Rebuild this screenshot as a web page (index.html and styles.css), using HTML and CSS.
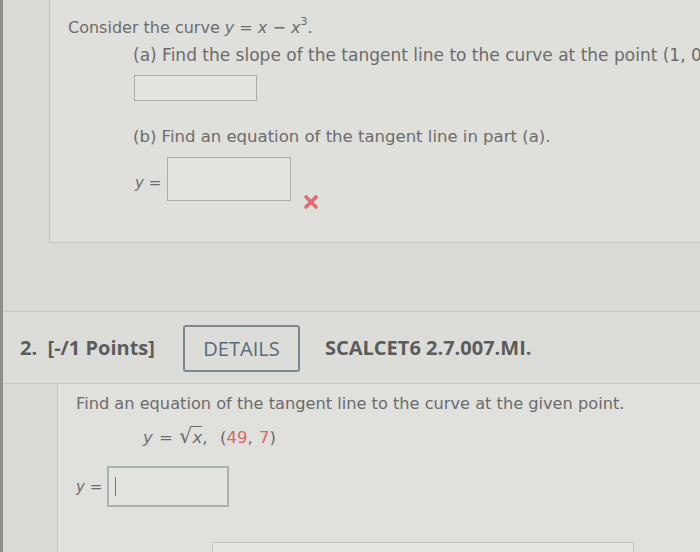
FILE: index.html
```html
<!DOCTYPE html>
<html>
<head>
<meta charset="utf-8">
<link rel="stylesheet" href="styles.css">
</head>
<body>
<div class="page">
  <section class="q1">
    <p class="intro">Consider the curve <i>y</i> = <i>x</i> − <i>x</i><sup>3</sup>.</p>
    <div class="part">
      <p class="ptext pa">(a) Find the slope of the tangent line to the curve at the point (1, 0).</p>
      <div class="inp inp-a"></div>
    </div>
    <div class="part part-b">
      <p class="ptext pb">(b) Find an equation of the tangent line in part (a).</p>
      <div class="ans-row ans1">
        <span class="lbl"><i>y</i> =</span>
        <div class="inp inp-b"></div>
        <svg class="wrong" width="16" height="16" viewBox="0 0 16 16"><path d="M3 3 L13 13 M13 3 L3 13" stroke="#e36b70" stroke-width="3.6" stroke-linecap="round"/></svg>
      </div>
    </div>
  </section>

  <div class="spacer"></div>

  <header class="qhead">
    <span class="qnum">2.&nbsp; [-/1 Points]</span>
    <span class="details">DETAILS</span>
    <span class="qid">SCALCET6 2.7.007.MI.</span>
  </header>

  <section class="q2">
    <p class="q2text">Find an equation of the tangent line to the curve at the given point.</p>
    <p class="formula"><i>y</i> = <span class="sqrt">√</span><span class="rad"><i>x</i></span>,&nbsp; (<span class="red">49</span>, <span class="red">7</span>)</p>
    <div class="ans-row ans2">
      <span class="lbl"><i>y</i> =</span>
      <div class="inp inp-c"><span class="caret"></span></div>
    </div>
    <div class="help"></div>
  </section>
</div>
</body>
</html>
```

FILE: styles.css
```css
html, body {
  margin: 0;
  padding: 0;
}
body {
  width: 700px;
  height: 552px;
  overflow: hidden;
  background: #d9d9d5;
  font-family: "DejaVu Sans", Verdana, sans-serif;
  color: #6c6c6c;
}
.page {
  border-left: 3px solid #8e8e8a;
  height: 552px;
  box-sizing: border-box;
  overflow: hidden;
}
p { margin: 0; }
i { font-style: italic; }

.q1 {
  margin-left: 46px;
  width: 700px;
  height: 243px;
  box-sizing: border-box;
  border-left: 1px solid #c2c2be;
  border-bottom: 1px solid #c2c2be;
  background: #dfdfdb;
  padding: 18px 0 0 18px;
}
.intro {
  font-size: 16px;
  line-height: 20px;
  white-space: nowrap;
}
.intro sup {
  font-size: 11px;
  vertical-align: 8px;
  line-height: 0;
}
.part {
  margin-left: 65px;
  white-space: nowrap;
}
.ptext {
  line-height: 20px;
}
.pa {
  font-size: 17px;
  margin-top: 7px;
}
.pb {
  font-size: 16.5px;
  margin-top: 26px;
}
.inp {
  background: #e3e3df;
  border: 1px solid #a9aca9;
  box-sizing: border-box;
}
.inp-a {
  width: 123px;
  height: 26px;
  margin-top: 10px;
  margin-left: 1px;
}
.ans-row {
  display: flex;
  align-items: center;
}
.ans1 { margin-top: 1px; }
.lbl {
  font-size: 15px;
  width: 34px;
  padding-left: 2px;
  box-sizing: border-box;
}
.ans1 .lbl { margin-top: 8px; }
.inp-b {
  width: 124px;
  height: 44px;
}
.wrong {
  align-self: flex-start;
  margin-top: 46px;
  margin-left: 12px;
}

.spacer { height: 68px; }

.qhead {
  height: 73px;
  box-sizing: border-box;
  border-top: 1px solid #c6c6c2;
  border-bottom: 1px solid #c6c6c2;
  background: #dcdcd8;
  display: flex;
  align-items: center;
  padding-left: 17px;
  font-family: "Open Sans", sans-serif;
  font-size: 20px;
  color: #5c5c5c;
  white-space: nowrap;
}
.qnum { font-weight: 700; width: 163px; }
.details {
  width: 117px;
  height: 47px;
  box-sizing: border-box;
  border: 2px solid #7b8791;
  border-radius: 3px;
  display: flex;
  align-items: center;
  justify-content: center;
  color: #5a6b7b;
  font-weight: 400;
  margin-top: 2px;
}
.qid { font-weight: 700; margin-left: 25px; }

.q2 {
  margin-left: 54px;
  height: 170px;
  border-left: 1px solid #c6c6c2;
  background: #e0e0dc;
  padding: 10px 0 0 18px;
  position: relative;
}
.q2text {
  font-size: 16.2px;
  line-height: 20px;
  white-space: nowrap;
}
.formula {
  font-size: 16.5px;
  margin-top: 12px;
  margin-left: 67px;
  line-height: 20px;
  white-space: nowrap;
  word-spacing: 1px;
}
.sqrt { font-size: 21px; }
.rad { border-top: 1px solid #6c6c6c; padding-top: 1px; }
.red { color: #d46a6a; }
.ans2 { margin-top: 18px; }
.ans2 .lbl { width: 31px; padding-left: 0; }
.inp-c {
  width: 122px;
  height: 41px;
  border: 2px solid #a8b0b0;
  position: relative;
}
.caret {
  position: absolute;
  left: 6px;
  top: 9px;
  width: 1px;
  height: 19px;
  background: #777;
}
.help {
  position: absolute;
  left: 154px;
  top: 158px;
  width: 420px;
  height: 20px;
  border: 1px solid #c2c2be;
  background: #e6e6e2;
}
```
